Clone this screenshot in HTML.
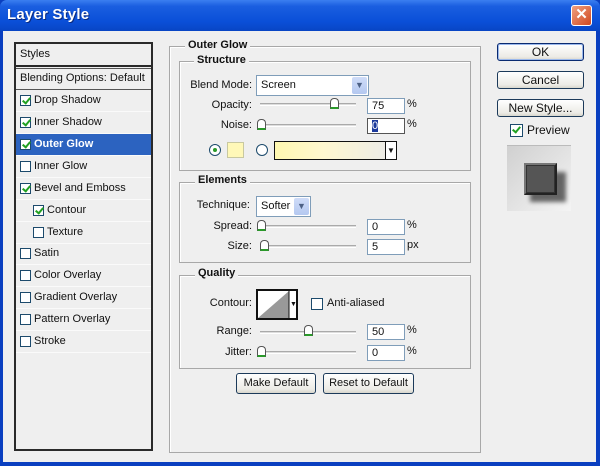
<!DOCTYPE html>
<html><head><style>
*{margin:0;padding:0;box-sizing:border-box}
body{width:600px;height:466px;overflow:hidden;background:#0a3fc0;font-family:"Liberation Sans",Tahoma,sans-serif;font-size:11px;color:#111;position:relative}
.a{position:absolute}
#title{left:0;top:0;width:600px;height:31px;background:linear-gradient(#3b7ff0,#1a5ee0 20%,#0a4fd8 70%,#0845c4);border-radius:7px 7px 0 0}
#title span{position:absolute;left:7px;top:6px;color:#fff;font:bold 15px "Liberation Sans",sans-serif;letter-spacing:0.2px;text-shadow:1px 1px #0a2a80}
#close{left:571px;top:5px;width:21px;height:21px;background:linear-gradient(135deg,#f0a080,#d04820);border:1px solid #fff;border-radius:3px;color:#fff;font:bold 15px/18px "Liberation Sans",sans-serif;text-align:center}
#body{left:3px;top:31px;width:593px;height:431px;background:#efefef}
#list{left:14px;top:42px;width:139px;height:409px;border:2px solid #2a2a2a;background:#efefef}
.row{position:absolute;left:0;width:135px;height:22px;border-bottom:1px solid #fafafa;line-height:21px;padding-left:18px;white-space:nowrap}
.cb{position:absolute;width:11px;height:11px;border:1px solid #1c4a6c;background:#fff;top:5px}
.cb.c::after{content:"";position:absolute;left:3px;top:0px;width:3px;height:6px;border:solid #21a121;border-width:0 2px 2px 0;transform:rotate(40deg)}
.sel{background:#2c63c0;color:#fff;font-weight:bold}
.fs{position:absolute;border:1px solid #a8a8a8;box-shadow:inset 1px 1px #fff}
.lg{position:absolute;background:#efefef;font-weight:bold;padding:0 3px;font-size:11px}
.lbl{position:absolute;text-align:right;width:70px}
.inp{position:absolute;width:38px;height:16px;border:1px solid #7f9db9;background:#fff;padding-left:4px;line-height:14px}
.track{position:absolute;height:3px;border-top:1px solid #aaa;border-bottom:1px solid #fff;background:#ddd}
.th{position:absolute;width:9px;height:11px;background:#fff;border:1px solid #555;border-bottom:2px solid #2a9a2a;border-radius:4px 4px 0 0}
.btn{position:absolute;border:1px solid #1c3a5a;border-radius:3px;background:linear-gradient(#fff,#ecebe6 80%,#d8d6cc);text-align:center;font-size:12px;line-height:16px}
.sel2{position:absolute;border:1px solid #7f9db9;background:#fff;padding-left:4px;line-height:18px;font-size:11px}
.dd{position:absolute;right:1px;top:1px;width:15px;bottom:1px;background:linear-gradient(#cfdcf8,#b4c8f0);border-radius:2px;color:#4d6185;font-size:9px;text-align:center;line-height:16px}
.pct{position:absolute;font-size:11px}
</style></head><body>
<div class="a" id="title"><span>Layer Style</span></div>
<div class="a" id="close">✕</div>
<div class="a" id="body"></div>

<div class="a" id="list">
 <div class="row" style="top:0;padding-left:4px;height:22px">Styles</div>
 <div class="a" style="left:0;top:21px;width:135px;height:4px;border-top:2px solid #2a2a2a;border-bottom:1px solid #555"></div>
 <div class="row" style="top:24px;padding-left:4px">Blending Options: Default</div>
 <div class="a" style="left:0;top:45px;width:135px;border-top:1px solid #555"></div>
 <div class="row" style="top:46px"><i class="cb c" style="left:4px"></i>Drop Shadow</div>
 <div class="row" style="top:68px"><i class="cb c" style="left:4px"></i>Inner Shadow</div>
 <div class="row sel" style="top:90px"><i class="cb c" style="left:4px"></i>Outer Glow</div>
 <div class="row" style="top:112px"><i class="cb" style="left:4px"></i>Inner Glow</div>
 <div class="row" style="top:134px"><i class="cb c" style="left:4px"></i>Bevel and Emboss</div>
 <div class="row" style="top:156px;padding-left:31px"><i class="cb c" style="left:17px"></i>Contour</div>
 <div class="row" style="top:178px;padding-left:31px"><i class="cb" style="left:17px"></i>Texture</div>
 <div class="row" style="top:199px"><i class="cb" style="left:4px"></i>Satin</div>
 <div class="row" style="top:221px"><i class="cb" style="left:4px"></i>Color Overlay</div>
 <div class="row" style="top:243px"><i class="cb" style="left:4px"></i>Gradient Overlay</div>
 <div class="row" style="top:265px"><i class="cb" style="left:4px"></i>Pattern Overlay</div>
 <div class="row" style="top:287px"><i class="cb" style="left:4px"></i>Stroke</div>
</div>

<div class="fs" style="left:169px;top:46px;width:312px;height:407px"></div>
<div class="lg" style="left:185px;top:39px">Outer Glow</div>

<div class="fs" style="left:179px;top:61px;width:292px;height:110px"></div>
<div class="lg" style="left:194px;top:54px">Structure</div>
<div class="lbl" style="left:182px;top:79px">Blend Mode:</div>
<div class="sel2" style="left:256px;top:75px;width:113px;height:21px">Screen<div class="dd">▼</div></div>
<div class="lbl" style="left:182px;top:99px">Opacity:</div>
<div class="track" style="left:260px;top:103px;width:96px"></div>
<div class="th" style="left:330px;top:98px"></div>
<div class="inp" style="left:367px;top:98px">75</div><div class="pct" style="left:407px;top:98px">%</div>
<div class="lbl" style="left:182px;top:119px">Noise:</div>
<div class="track" style="left:260px;top:124px;width:96px"></div>
<div class="th" style="left:257px;top:119px"></div>
<div class="inp" style="left:367px;top:118px;border-color:#555"><span style="background:#1c3a9c;color:#fff">0</span></div><div class="pct" style="left:407px;top:118px">%</div>
<div class="a" style="left:209px;top:144px;width:12px;height:12px;border:1px solid #1c4a6c;border-radius:50%;background:#fff"><div class="a" style="left:3px;top:3px;width:4px;height:4px;border-radius:50%;background:#2a9a2a"></div></div>
<div class="a" style="left:227px;top:142px;width:17px;height:16px;background:#fff8b8;border:1px solid #c8c8a0"></div>
<div class="a" style="left:256px;top:144px;width:12px;height:12px;border:1px solid #1c4a6c;border-radius:50%;background:#fff"></div>
<div class="a" style="left:274px;top:141px;width:123px;height:19px;border:1px solid #111;background:linear-gradient(90deg,#fff8b0,#fff8d0 40%,#eaeaea);"><div class="a" style="right:0;top:0;width:11px;height:17px;background:#fff;border-left:1px solid #111;text-align:center;font-size:8px;line-height:17px">▼</div></div>

<div class="fs" style="left:179px;top:182px;width:292px;height:81px"></div>
<div class="lg" style="left:195px;top:174px">Elements</div>
<div class="lbl" style="left:180px;top:199px">Technique:</div>
<div class="sel2" style="left:256px;top:196px;width:55px;height:21px">Softer<div class="dd">▼</div></div>
<div class="lbl" style="left:182px;top:220px">Spread:</div>
<div class="track" style="left:260px;top:225px;width:96px"></div>
<div class="th" style="left:257px;top:220px"></div>
<div class="inp" style="left:367px;top:219px">0</div><div class="pct" style="left:407px;top:219px">%</div>
<div class="lbl" style="left:182px;top:240px">Size:</div>
<div class="track" style="left:260px;top:245px;width:96px"></div>
<div class="th" style="left:260px;top:240px"></div>
<div class="inp" style="left:367px;top:239px">5</div><div class="pct" style="left:407px;top:239px">px</div>

<div class="fs" style="left:179px;top:275px;width:292px;height:94px"></div>
<div class="lg" style="left:195px;top:267px">Quality</div>
<div class="lbl" style="left:182px;top:297px">Contour:</div>
<div class="a" style="left:256px;top:289px;width:42px;height:31px;border:2px solid #111;background:#fff;overflow:hidden">
<svg width="38" height="27" style="position:absolute;left:0;top:0"><polygon points="0,27 31,0 31,27" fill="#999"/><rect x="31" y="0" width="7" height="27" fill="#fff"/><line x1="31" y1="0" x2="31" y2="27" stroke="#111"/><text x="32" y="15" font-size="7" fill="#111">▼</text></svg></div>
<div class="a" style="left:311px;top:298px;width:12px;height:12px;border:1px solid #1c4a6c;background:#fff"></div>
<div class="a" style="left:327px;top:297px">Anti-aliased</div>
<div class="lbl" style="left:182px;top:325px">Range:</div>
<div class="track" style="left:260px;top:331px;width:96px"></div>
<div class="th" style="left:304px;top:325px"></div>
<div class="inp" style="left:367px;top:324px">50</div><div class="pct" style="left:407px;top:324px">%</div>
<div class="lbl" style="left:182px;top:346px">Jitter:</div>
<div class="track" style="left:260px;top:351px;width:96px"></div>
<div class="th" style="left:257px;top:346px"></div>
<div class="inp" style="left:367px;top:345px">0</div><div class="pct" style="left:407px;top:345px">%</div>

<div class="btn" style="left:236px;top:373px;width:80px;height:21px;line-height:19px;font-size:11px">Make Default</div>
<div class="btn" style="left:323px;top:373px;width:91px;height:21px;line-height:19px;font-size:11px">Reset to Default</div>

<div class="btn" style="left:497px;top:43px;width:87px;height:18px;border-color:#0a2a70;box-shadow:inset 0 0 0 1px #9ab8ec">OK</div>
<div class="btn" style="left:497px;top:71px;width:87px;height:18px">Cancel</div>
<div class="btn" style="left:497px;top:99px;width:87px;height:18px">New Style...</div>
<div class="a" style="left:510px;top:124px;width:13px;height:13px;border:1px solid #1c4a6c;background:#fff"><i class="cb c" style="left:0;top:0;border:none;background:none"></i></div>
<div class="a" style="left:527px;top:123px;font-size:12px">Preview</div>
<div class="a" style="left:507px;top:145px;width:64px;height:66px;background:linear-gradient(135deg,#d0d0d0,#f4f4f4);border-top:1px solid #bbb"></div>
<div class="a" style="left:530px;top:172px;width:36px;height:30px;background:#444;filter:blur(2px);opacity:.8"></div>
<div class="a" style="left:524px;top:163px;width:33px;height:32px;background:#555;border:2px solid #222;border-top-color:#777;border-left-color:#777;box-shadow:inset 0 0 0 1px #333"></div>
</body></html>
